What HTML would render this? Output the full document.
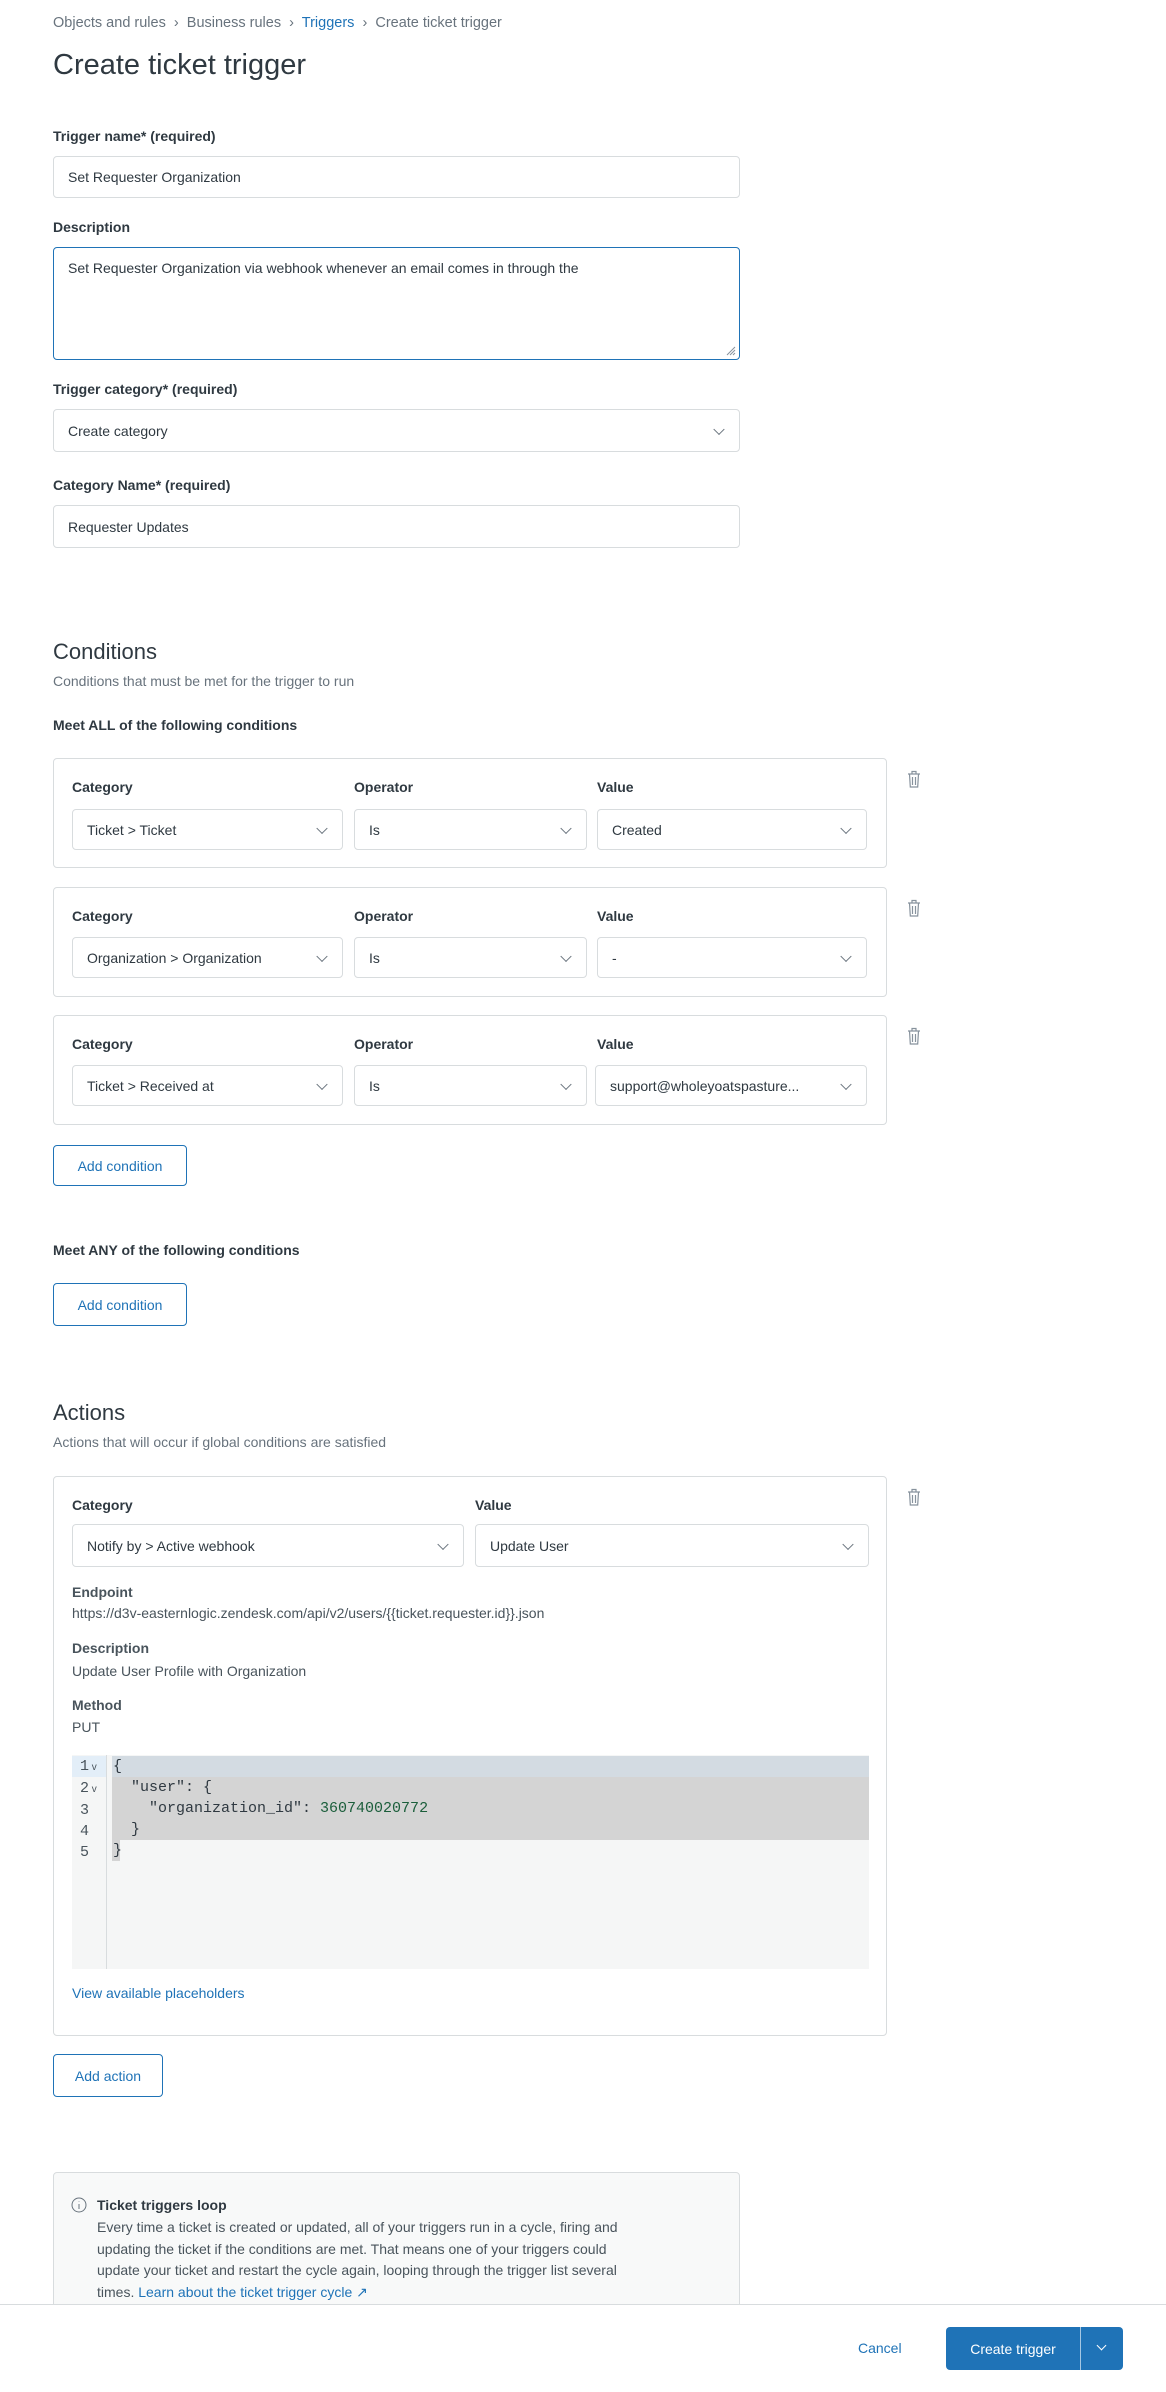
<!DOCTYPE html>
<html><head><meta charset="utf-8"><style>
*{box-sizing:border-box;margin:0;padding:0}
body{width:1166px;height:2392px;position:relative;background:#fff;font-family:"Liberation Sans",sans-serif;color:#2f3941;font-size:14px;overflow:hidden}
.a{position:absolute}
.lbl{position:absolute;font-weight:bold;font-size:14px;line-height:20px;color:#2f3941}
.inp{position:absolute;border:1px solid #d8dcde;border-radius:4px;background:#fff;padding:0 14px;display:flex;align-items:center;font-size:14px;color:#2f3941;white-space:nowrap;overflow:hidden}
.sel::after{content:"";position:absolute;right:16px;top:50%;width:7px;height:7px;border-right:1.3px solid #68737d;border-bottom:1.3px solid #68737d;transform:translateY(-70%) rotate(45deg)}
.box{position:absolute;border:1px solid #d8dcde;border-radius:4px;background:#fff}
.btn{position:absolute;border:1px solid #1f73b7;border-radius:4px;color:#1f73b7;font-size:14px;display:flex;align-items:center;justify-content:center;background:#fff}
.sub{position:absolute;font-size:14px;color:#68737d;line-height:20px}
.h2{position:absolute;font-size:22px;line-height:28px;color:#2f3941}
.txt{position:absolute;font-size:14px;color:#49545c;line-height:20px}
.code{font-family:"Liberation Mono",monospace;font-size:15px}
</style></head><body>
<div class="a" style="left:53px;top:13px;font-size:14.5px;color:#68737d;line-height:20px">Objects and rules &nbsp;›&nbsp; Business rules &nbsp;›&nbsp; <span style="color:#1f73b7">Triggers</span> &nbsp;›&nbsp; Create ticket trigger</div>
<div class="a" style="left:53px;top:47px;font-size:29px;line-height:36px;color:#2f3941">Create ticket trigger</div>

<div class="lbl" style="left:53px;top:126px">Trigger name* (required)</div>
<div class="inp" style="left:53px;top:156px;width:687px;height:42px">Set Requester Organization</div>
<div class="lbl" style="left:53px;top:217px">Description</div>
<div class="inp" style="left:53px;top:247px;width:687px;height:113px;border-color:#1f73b7;align-items:flex-start;padding-top:12px">Set Requester Organization via webhook whenever an email comes in through the</div>
<svg class="a" style="left:726px;top:346px" width="10" height="10" viewBox="0 0 10 10" stroke="#87929d" stroke-width="1"><path d="M9 1L1 9M9 4L4 9M9 7L7 9"/></svg>
<div class="lbl" style="left:53px;top:379px">Trigger category* (required)</div>
<div class="inp sel" style="left:53px;top:409px;width:687px;height:43px">Create category</div>
<div class="lbl" style="left:53px;top:475px">Category Name* (required)</div>
<div class="inp" style="left:53px;top:505px;width:687px;height:43px">Requester Updates</div>

<div class="h2" style="left:53px;top:638px">Conditions</div>
<div class="sub" style="left:53px;top:671px">Conditions that must be met for the trigger to run</div>
<div class="lbl" style="left:53px;top:715px">Meet ALL of the following conditions</div>

<div class="box" style="left:53px;top:758px;width:834px;height:110px"></div>
<div class="lbl" style="left:72px;top:777px">Category</div><div class="lbl" style="left:354px;top:777px">Operator</div><div class="lbl" style="left:597px;top:777px">Value</div>
<div class="inp sel" style="left:72px;top:809px;width:271px;height:41px">Ticket &gt; Ticket</div>
<div class="inp sel" style="left:354px;top:809px;width:233px;height:41px">Is</div>
<div class="inp sel" style="left:597px;top:809px;width:270px;height:41px">Created</div>

<div class="box" style="left:53px;top:887px;width:834px;height:110px"></div>
<div class="lbl" style="left:72px;top:906px">Category</div><div class="lbl" style="left:354px;top:906px">Operator</div><div class="lbl" style="left:597px;top:906px">Value</div>
<div class="inp sel" style="left:72px;top:937px;width:271px;height:41px">Organization &gt; Organization</div>
<div class="inp sel" style="left:354px;top:937px;width:233px;height:41px">Is</div>
<div class="inp sel" style="left:597px;top:937px;width:270px;height:41px">-</div>

<div class="box" style="left:53px;top:1015px;width:834px;height:110px"></div>
<div class="lbl" style="left:72px;top:1034px">Category</div><div class="lbl" style="left:354px;top:1034px">Operator</div><div class="lbl" style="left:597px;top:1034px">Value</div>
<div class="inp sel" style="left:72px;top:1065px;width:271px;height:41px">Ticket &gt; Received at</div>
<div class="inp sel" style="left:354px;top:1065px;width:233px;height:41px">Is</div>
<div class="inp sel" style="left:595px;top:1065px;width:272px;height:41px;padding-right:36px">support@wholeyoatspasture...</div>

<svg class="a" style="left:907px;top:770px" width="14" height="18" viewBox="0 0 14 18" fill="none" stroke="#87929d" stroke-width="1.2"><path d="M1 4h12M5 4V1.5h4V4M2.5 4l.8 13h7.4l.8-13M5.5 7v8M8.5 7v8"/></svg>
<svg class="a" style="left:907px;top:899px" width="14" height="18" viewBox="0 0 14 18" fill="none" stroke="#87929d" stroke-width="1.2"><path d="M1 4h12M5 4V1.5h4V4M2.5 4l.8 13h7.4l.8-13M5.5 7v8M8.5 7v8"/></svg>
<svg class="a" style="left:907px;top:1027px" width="14" height="18" viewBox="0 0 14 18" fill="none" stroke="#87929d" stroke-width="1.2"><path d="M1 4h12M5 4V1.5h4V4M2.5 4l.8 13h7.4l.8-13M5.5 7v8M8.5 7v8"/></svg>

<div class="btn" style="left:53px;top:1145px;width:134px;height:41px">Add condition</div>
<div class="lbl" style="left:53px;top:1240px">Meet ANY of the following conditions</div>
<div class="btn" style="left:53px;top:1283px;width:134px;height:43px">Add condition</div>

<div class="h2" style="left:53px;top:1399px">Actions</div>
<div class="sub" style="left:53px;top:1432px">Actions that will occur if global conditions are satisfied</div>

<div class="box" style="left:53px;top:1476px;width:834px;height:560px"></div>
<svg class="a" style="left:907px;top:1488px" width="14" height="18" viewBox="0 0 14 18" fill="none" stroke="#87929d" stroke-width="1.2"><path d="M1 4h12M5 4V1.5h4V4M2.5 4l.8 13h7.4l.8-13M5.5 7v8M8.5 7v8"/></svg>
<div class="lbl" style="left:72px;top:1495px">Category</div><div class="lbl" style="left:475px;top:1495px">Value</div>
<div class="inp sel" style="left:72px;top:1524px;width:392px;height:43px">Notify by &gt; Active webhook</div>
<div class="inp sel" style="left:475px;top:1524px;width:394px;height:43px">Update User</div>
<div class="lbl" style="left:72px;top:1582px;color:#49545c">Endpoint</div>
<div class="txt" style="left:72px;top:1603px">https://d3v-easternlogic.zendesk.com/api/v2/users/{{ticket.requester.id}}.json</div>
<div class="lbl" style="left:72px;top:1638px;color:#49545c">Description</div>
<div class="txt" style="left:72px;top:1661px">Update User Profile with Organization</div>
<div class="lbl" style="left:72px;top:1695px;color:#49545c">Method</div>
<div class="txt" style="left:72px;top:1717px">PUT</div>

<div class="a" style="left:72px;top:1755px;width:797px;height:214px;background:#f5f6f6"></div>
<div class="a" style="left:106px;top:1755px;width:1px;height:214px;background:#d8dcde"></div>
<div class="a" style="left:72px;top:1756px;width:34px;height:21px;background:#e3eef8"></div>
<div class="a" style="left:112px;top:1756px;width:757px;height:21px;background:#d3dbe2"></div>
<div class="a" style="left:112px;top:1777px;width:757px;height:63px;background:#d4d4d4"></div>
<div class="a" style="left:112px;top:1840px;width:8px;height:21px;background:#d4d4d4"></div>
<div class="a code" style="left:80px;top:1756px;line-height:21px;color:#49545c">1<span style="font-size:10px;font-family:'Liberation Sans'"> v</span><br>2<span style="font-size:10px;font-family:'Liberation Sans'"> v</span><br>3<br>4<br>5</div>
<div class="a code" style="left:113px;top:1756px;line-height:21px;color:#2f3941;white-space:pre">{
  "user": {
    "organization_id": <span style="color:#1b5e3b">360740020772</span>
  }
}</div>
<div class="a" style="left:72px;top:1983px;font-size:14px;color:#1f73b7;line-height:20px">View available placeholders</div>

<div class="btn" style="left:53px;top:2054px;width:110px;height:43px">Add action</div>

<div class="a" style="left:53px;top:2172px;width:687px;height:140px;background:#f8f9f9;border:1px solid #d8dcde;border-radius:4px"></div>
<svg class="a" style="left:71px;top:2197px" width="16" height="16" viewBox="0 0 16 16" fill="none" stroke="#68737d" stroke-width="1"><circle cx="8" cy="8" r="7"/><path d="M8 7v5M8 4.5v.5"/></svg>
<div class="a" style="left:97px;top:2195px;font-weight:bold;font-size:14px;line-height:20px;color:#2f3941">Ticket triggers loop</div>
<div class="a" style="left:97px;top:2217px;white-space:nowrap;font-size:14px;line-height:21.5px;color:#49545c">Every time a ticket is created or updated, all of your triggers run in a cycle, firing and<br>updating the ticket if the conditions are met. That means one of your triggers could<br>update your ticket and restart the cycle again, looping through the trigger list several<br>times. <span style="color:#1f73b7">Learn about the ticket trigger cycle ↗</span></div>

<div class="a" style="left:0;top:2304px;width:1166px;height:88px;background:#fff;border-top:1px solid #d8dcde"></div>
<div class="a" style="left:858px;top:2338px;font-size:14px;line-height:20px;color:#1f73b7">Cancel</div>
<div class="a" style="left:946px;top:2327px;width:177px;height:43px;background:#1f73b7;border-radius:4px"></div>
<div class="a" style="left:1080px;top:2327px;width:1px;height:43px;background:#fff;opacity:.6"></div>
<div class="a" style="left:946px;top:2327px;width:134px;height:43px;color:#fff;font-size:14px;display:flex;align-items:center;justify-content:center">Create trigger</div>
<div class="a" style="left:1098px;top:2342px;width:7px;height:7px;border-right:1.3px solid #fff;border-bottom:1.3px solid #fff;transform:rotate(45deg)"></div>
</body></html>
